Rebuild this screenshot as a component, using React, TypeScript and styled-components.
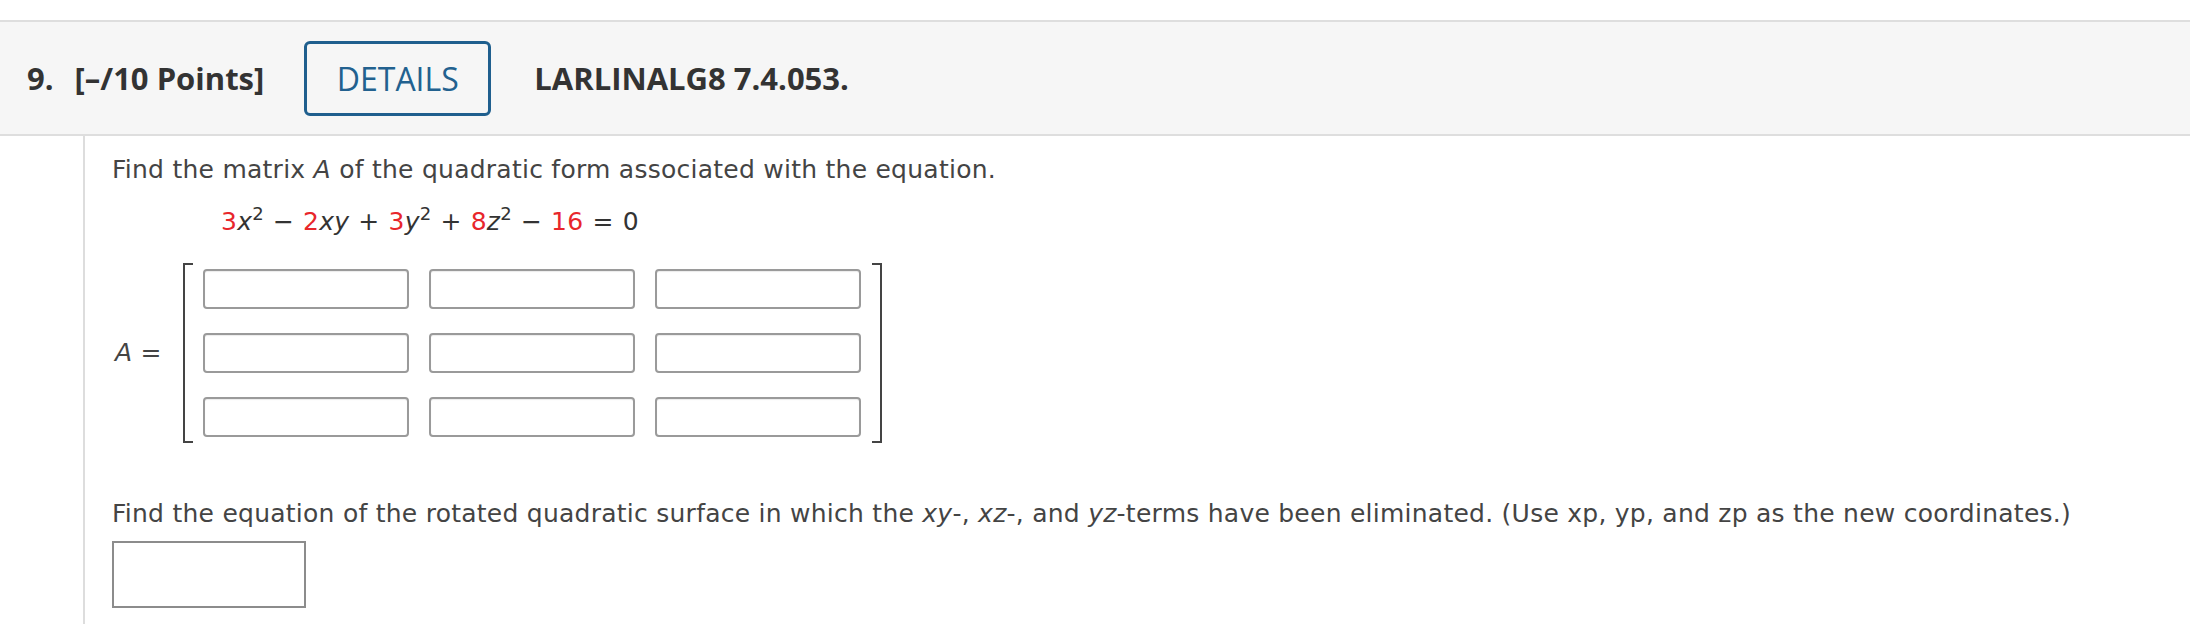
import styled, { createGlobalStyle } from 'styled-components';

const GlobalStyle = createGlobalStyle`
  html, body {
    margin: 0;
    padding: 0;
    background: #ffffff;
  }
  body {
    font-family: "DejaVu Sans", Verdana, sans-serif;
    color: #444444;
  }
`;

const Page = styled.div`
  padding-top: 20px;
  min-height: 604px;
  display: flex;
  flex-direction: column;
`;

const Header = styled.header`
  display: flex;
  align-items: center;
  height: 112px;
  padding-left: 27px;
  background-color: #f6f6f6;
  border-top: 2px solid #dedede;
  border-bottom: 2px solid #dedede;
  font-family: "Open Sans", "Liberation Sans", sans-serif;
  font-size: 31px;
  font-weight: 700;
  color: #333333;
`;

const QuestionNo = styled.span`
  margin-right: 21px;
`;

const Points = styled.span`
  margin-right: 40px;
`;

const DetailsButton = styled.button`
  display: flex;
  align-items: center;
  justify-content: center;
  box-sizing: border-box;
  width: 187px;
  height: 75px;
  margin: 0 43px 0 0;
  padding: 0;
  background: transparent;
  border: 3px solid #1f5f8e;
  border-radius: 6px;
  font-family: "Open Sans", "Liberation Sans", sans-serif;
  font-size: 32px;
  font-weight: 400;
  color: #22618f;
`;

const Reference = styled.span``;

const Body = styled.main`
  flex: 1;
  margin-left: 83px;
  border-left: 2px solid #dddddd;
  padding: 19px 0 16px 27px;
  font-size: 25px;
  letter-spacing: 0.25px;
`;

const Line = styled.p<{ gapTop?: number }>`
  margin: ${(p) => p.gapTop ?? 0}px 0 0;
  line-height: 30px;
  white-space: nowrap;
`;

const Equation = styled.div`
  margin: 22px 0 0 109px;
  line-height: 30px;
  white-space: nowrap;
  color: #333333;
`;

const Coef = styled.span`
  color: #e8262b;
`;

const Var = styled.i`
  font-style: italic;
`;

const Op = styled.span`
  margin: 0 9px;
`;

const Sup = styled.sup`
  font-size: 18px;
  line-height: 0;
  vertical-align: 10px;
`;

const MatrixRow = styled.div`
  display: flex;
  align-items: center;
  margin-top: 26px;
`;

const MatrixLabel = styled.span`
  margin: 0 21px 0 3px;
  line-height: 30px;
`;

const Bracket = styled.div<{ side: 'left' | 'right' }>`
  align-self: stretch;
  width: 8px;
  border: 2px solid #444444;
  ${(p) => (p.side === 'left' ? 'border-right: none;' : 'border-left: none;')}
`;

const MatrixGrid = styled.div`
  display: grid;
  grid-template-columns: repeat(3, 206px);
  grid-auto-rows: 40px;
  column-gap: 20px;
  row-gap: 24px;
  padding: 6px 0;
  margin: 0 11px 0 10px;
`;

const Cell = styled.input`
  box-sizing: border-box;
  width: 100%;
  height: 100%;
  margin: 0;
  background: #ffffff;
  border: 2px solid #9a9a9a;
  border-radius: 4px;
  box-shadow: inset 0 1px 1px rgba(0, 0, 0, 0.08);
`;

const AnswerBox = styled.input`
  display: block;
  box-sizing: border-box;
  width: 194px;
  height: 67px;
  margin: 12px 0 0;
  background: #ffffff;
  border: 2px solid #8c8c8c;
  border-radius: 0;
`;

export default function App() {
  const cells = Array.from({ length: 9 }, (_, i) => i);

  return (
    <>
      <GlobalStyle />
      <Page>
        <Header>
          <QuestionNo>9.</QuestionNo>
          <Points>[–/10 Points]</Points>
          <DetailsButton type="button">DETAILS</DetailsButton>
          <Reference>LARLINALG8 7.4.053.</Reference>
        </Header>
        <Body>
          <Line>
            Find the matrix <Var>A</Var> of the quadratic form associated with the equation.
          </Line>
          <Equation>
            <Coef>3</Coef>
            <Var>x</Var>
            <Sup>2</Sup>
            <Op>−</Op>
            <Coef>2</Coef>
            <Var>xy</Var>
            <Op>+</Op>
            <Coef>3</Coef>
            <Var>y</Var>
            <Sup>2</Sup>
            <Op>+</Op>
            <Coef>8</Coef>
            <Var>z</Var>
            <Sup>2</Sup>
            <Op>−</Op>
            <Coef>16</Coef>
            <Op>=</Op>0
          </Equation>
          <MatrixRow>
            <MatrixLabel>
              <Var>A</Var> =
            </MatrixLabel>
            <Bracket side="left" />
            <MatrixGrid>
              {cells.map((i) => (
                <Cell key={'cell-' + i} type="text" aria-label={'matrix entry ' + (i + 1)} />
              ))}
            </MatrixGrid>
            <Bracket side="right" />
          </MatrixRow>
          <Line gapTop={56}>
            Find the equation of the rotated quadratic surface in which the <Var>xy</Var>-,{' '}
            <Var>xz</Var>-, and <Var>yz</Var>-terms have been eliminated. (Use xp, yp, and zp as
            the new coordinates.)
          </Line>
          <AnswerBox type="text" aria-label="rotated equation" />
        </Body>
      </Page>
    </>
  );
}
